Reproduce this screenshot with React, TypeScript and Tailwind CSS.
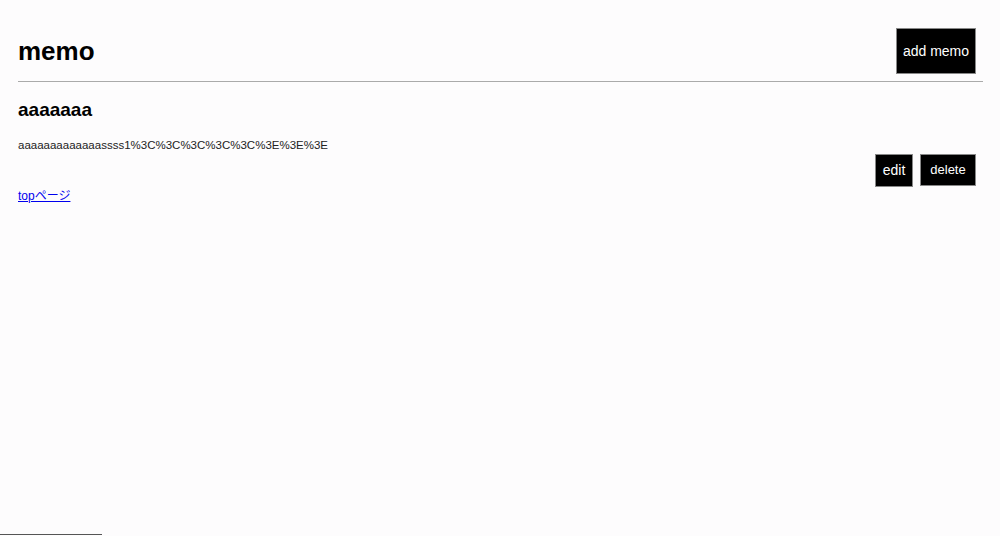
import React from "react";

const font = { fontFamily: '"Liberation Sans", "Noto Sans CJK JP", sans-serif' };

const MemoDetail = () => {
  return (
    <div className="flex flex-col">
      <h2 className="mt-[16px] text-[19px] font-bold leading-[24px] text-black">aaaaaaa</h2>
      <p className="mt-[16px] text-[11.5px] leading-[14px] text-[#222]">
        aaaaaaaaaaaaassss1%3C%3C%3C%3C%3C%3E%3E%3E
      </p>
      <div className="mt-[2px] flex justify-end gap-[7px] pr-[7px]">
        <button className="h-[33px] w-[38px] border border-[#888] bg-black text-[14px] text-white">
          edit
        </button>
        <button className="h-[32px] w-[56px] border border-[#888] bg-black text-[13px] text-white">
          delete
        </button>
      </div>
      <a href="#" className="mt-[1px] w-fit text-[12px] leading-[16px] text-[#0000ee] underline">
        topページ
      </a>
    </div>
  );
};

export default function App() {
  return (
    <div className="relative min-h-[536px] bg-[#fdfcfd] px-[17px] pl-[18px]" style={font}>
      <header className="flex items-center justify-between border-b border-[#aaa] pt-[28px] pb-[7px]">
        <h1 className="text-[26px] font-bold leading-[34px] text-black">memo</h1>
        <button className="mr-[7px] h-[46px] w-[80px] border border-[#888] bg-black text-[14px] text-white">
          add memo
        </button>
      </header>
      <MemoDetail />
      <div className="absolute bottom-[1px] left-0 h-px w-[102px] bg-[#555]" />
    </div>
  );
}
